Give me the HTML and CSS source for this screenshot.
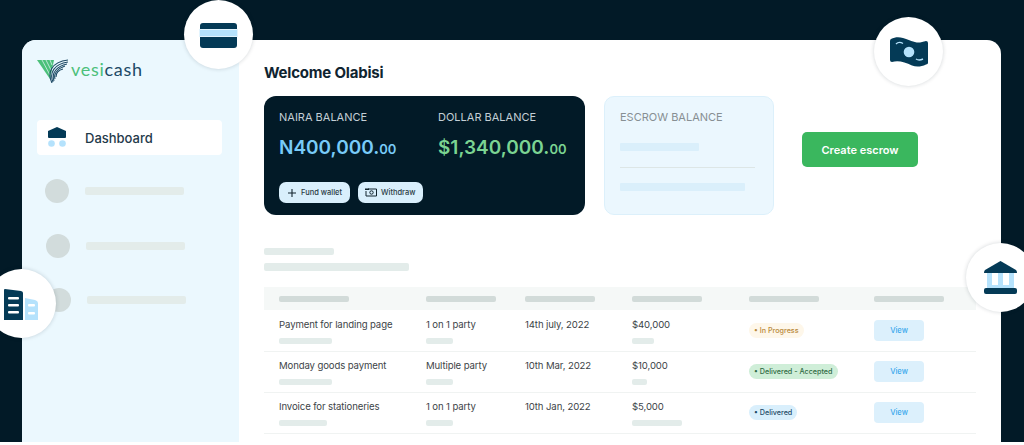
FILE: index.html
```html
<!DOCTYPE html>
<html lang="en">
<head>
  <meta charset="UTF-8">
  <meta name="viewport" content="width=device-width, initial-scale=1">
  <title>Vesicash Dashboard</title>
  <link rel="stylesheet" href="styles.css">
</head>
<body>
  <div class="hero">
    <div class="panel">
      <aside class="sidebar">
        <div class="logo">
          <svg class="logo-mark" width="31" height="24" viewBox="0 0 31 24" fill="none">
            <path d="M0 1 H17 L13 20 Z" fill="#4cc07a"/>
            <g stroke="#ebf8fe" stroke-width="0.7">
              <path d="M5 1 L13 16"/><path d="M9 1 L14 11"/><path d="M13 1 L15 6"/>
            </g>
            <g stroke="#1d4a66" stroke-width="1.1">
              <path d="M15 24 C10 14 14 3 31 1"/>
              <path d="M16 23 C12 14 17 5 31 3"/>
              <path d="M17 22 C14 14 20 7 30 5"/>
              <path d="M18 20 C16 14 22 9 28 7"/>
              <path d="M19 18 C19 14 22 11 26 10"/>
            </g>
          </svg>
          <span class="logo-text"><span class="logo-green">vesi</span>cash</span>
        </div>
        <nav class="nav">
          <a class="nav-active">
            <svg width="18" height="21" viewBox="0 0 18 21">
              <path d="M0 4 L9 0 L18 4 V10 Q18 11 17 11 H1 Q0 11 0 10 Z" fill="#043a56"/>
              <circle cx="3.5" cy="16.5" r="3.3" fill="#b5e2fc"/>
              <circle cx="14.5" cy="16.5" r="3.3" fill="#b5e2fc"/>
            </svg>
            <span class="nav-label">Dashboard</span>
          </a>
          <div class="nav-item"><i class="nav-dot"></i><i class="nav-bar"></i></div>
          <div class="nav-item"><i class="nav-dot"></i><i class="nav-bar"></i></div>
          <div class="nav-item"><i class="nav-dot"></i><i class="nav-bar"></i></div>
        </nav>
      </aside>

      <main class="main">
        <h1 class="title">Welcome Olabisi</h1>

        <section class="cards">
          <div class="balance-card">
            <div class="balance-cols">
              <div class="balance-col">
                <p class="balance-label">NAIRA BALANCE</p>
                <p class="balance-value naira">N400,000.<small>00</small></p>
              </div>
              <div class="balance-col">
                <p class="balance-label">DOLLAR BALANCE</p>
                <p class="balance-value dollar">$1,340,000.<small>00</small></p>
              </div>
            </div>
            <div class="balance-actions">
              <button class="pill-btn fund">
                <svg width="10" height="10" viewBox="0 0 10 10"><path d="M5 1 V9 M1 5 H9" stroke="#12242e" stroke-width="1.1"/></svg>
                Fund wallet
              </button>
              <button class="pill-btn withdraw">
                <svg width="12" height="9" viewBox="0 0 12 9" fill="none"><path d="M3 1 H11.500 V8 H1 V3" stroke="#12242e"/><circle cx="6.500" cy="4.500" r="1.700" stroke="#12242e"/><path d="M0 0.500 H4 V2 H0 Z" fill="#12242e"/></svg>
                Withdraw
              </button>
            </div>
          </div>

          <div class="escrow-card">
            <p class="escrow-label">ESCROW BALANCE</p>
            <i class="escrow-bar short"></i>
            <hr class="escrow-line">
            <i class="escrow-bar long"></i>
          </div>

          <button class="create-btn">Create escrow</button>
        </section>

        <div class="skeleton-head">
          <i class="skel-a"></i>
          <i class="skel-b"></i>
        </div>

        <section class="table">
          <div class="row head">
            <i class="th"></i><i class="th"></i><i class="th"></i><i class="th"></i><i class="th"></i><i class="th"></i>
          </div>
          <div class="row">
            <div class="cell"><span>Payment for landing page</span><i class="sub w53"></i></div>
            <div class="cell"><span>1 on 1 party</span><i class="sub w27"></i></div>
            <div class="cell"><span>14th july, 2022</span></div>
            <div class="cell"><span>$40,000</span><i class="sub w22"></i></div>
            <div class="cell-mid"><span class="status progress">• In Progress</span></div>
            <div class="cell-mid"><button class="view-btn">View</button></div>
          </div>
          <div class="row">
            <div class="cell"><span>Monday goods payment</span><i class="sub w53"></i></div>
            <div class="cell"><span>Multiple party</span><i class="sub w27"></i></div>
            <div class="cell"><span>10th Mar, 2022</span></div>
            <div class="cell"><span>$10,000</span><i class="sub w15"></i></div>
            <div class="cell-mid"><span class="status accepted">• Delivered - Accepted</span></div>
            <div class="cell-mid"><button class="view-btn">View</button></div>
          </div>
          <div class="row">
            <div class="cell"><span>Invoice for stationeries</span><i class="sub w48"></i></div>
            <div class="cell"><span>1 on 1 party</span><i class="sub w27"></i></div>
            <div class="cell"><span>10th Jan, 2022</span></div>
            <div class="cell"><span>$5,000</span><i class="sub w50"></i></div>
            <div class="cell-mid"><span class="status delivered">• Delivered</span></div>
            <div class="cell-mid"><button class="view-btn">View</button></div>
          </div>
        </section>
      </main>
    </div>

    <!-- floating icon circles -->
    <div class="float float-card">
      <svg width="40" height="26" viewBox="0 0 40 26">
        <rect x="1" y="0" width="37" height="25" rx="3" fill="#043a56"/>
        <rect x="0" y="6" width="39" height="8" fill="#e2f4fe"/>
        <rect x="1" y="7" width="37" height="6" fill="#b5e2fc"/>
      </svg>
    </div>
    <div class="float float-money">
      <svg width="38" height="30" viewBox="0 0 38 30">
        <path d="M1 2 C5 0 9 0 13 1 C20 3 24 6 30 5.500 L36 4 Q38 4 38 6 V26 Q38 27 36 27.500 C31 30 26 30 22 28.500 C15 25 8 23 2 25 Q0 25 0 23 V4 Q0 2.500 1 2 Z" fill="#043a56"/>
        <circle cx="19" cy="15" r="5.300" fill="#b5e2fc"/>
        <path d="M6 7 Q9 4 13 6.500" stroke="#b5e2fc" stroke-width="1.400" fill="none"/>
        <path d="M26 22 Q29 24 33 22" stroke="#b5e2fc" stroke-width="1.400" fill="none"/>
      </svg>
    </div>
    <div class="float float-building">
      <svg width="35" height="31" viewBox="0 0 35 31">
        <path d="M0 1 Q0 0 1 0 L17 2 Q19 2.500 19 4 V31 H0 Z" fill="#043a56"/>
        <path d="M21 9 L31 11 Q34 12 34 14 V31 H21 Z" fill="#b5e2fc"/>
        <g fill="#ffffff">
          <rect x="4" y="8" width="11" height="2.500" rx="1"/>
          <rect x="4" y="15" width="11" height="2.500" rx="1"/>
          <rect x="4" y="22" width="11" height="2.500" rx="1"/>
          <rect x="24" y="15" width="7" height="2.500" rx="1"/>
          <rect x="24" y="23" width="7" height="2.500" rx="1"/>
        </g>
      </svg>
    </div>
    <div class="float float-bank">
      <svg width="33" height="33" viewBox="0 0 33 33">
        <g fill="#b5e2fc">
          <rect x="3" y="12" width="5" height="15"/>
          <rect x="14" y="12" width="5" height="15"/>
          <rect x="25" y="12" width="5" height="15"/>
          <rect x="3" y="24" width="27" height="3"/>
        </g>
        <path d="M16.500 0 L32 9 Q33 10 33 12 H0 Q0 10 1 9 Z" fill="#043a56"/>
        <rect x="0" y="27" width="33" height="6" rx="2" fill="#043a56"/>
      </svg>
    </div>
  </div>
</body>
</html>
```

FILE: styles.css
```css
* {
  box-sizing: border-box;
  margin: 0;
  padding: 0;
  font-family: 'Inter', sans-serif;
}

body {
  background: #fff;
}

i {
  display: block;
}

.hero {
  position: relative;
  height: 442px;
  padding: 40px 23px 0 22px;
  background: #021a27;
  overflow: hidden;
}

.panel {
  display: flex;
  height: 402px;
  background: #fff;
  border-radius: 14px 14px 0 0;
  overflow: hidden;
}

/* sidebar */
.sidebar {
  width: 217px;
  flex-shrink: 0;
  padding: 19px 0 0 15px;
  background: #ebf8fe;
}

.logo {
  display: flex;
  align-items: center;
  gap: 3px;
  height: 24px;
}

.logo-text {
  padding-bottom: 4px;
  font-family: 'Lato', sans-serif;
  font-size: 18px;
  line-height: 24px;
  letter-spacing: 0.7px;
  color: #1d4a66;
}

.logo-green {
  font-family: inherit;
  color: #4cc07a;
}

.nav {
  margin-top: 37px;
}

.nav-active {
  display: flex;
  align-items: center;
  gap: 19px;
  width: 185px;
  height: 35px;
  padding-left: 11px;
  background: #fff;
  border-radius: 4px;
  font-size: 13px;
  font-weight: 500;
  color: #1f3a4a;
}

.nav-label {
  padding-top: 1px;
}

.nav-item {
  display: flex;
  align-items: center;
  gap: 16px;
  margin-top: 31px;
  padding-left: 8px;
}

.nav-active + .nav-item {
  margin-top: 24px;
}

.nav-item:nth-child(3) {
  padding-left: 9px;
}

.nav-item:nth-child(4) {
  margin-top: 30px;
  padding-left: 10px;
}

.nav-dot {
  width: 24px;
  height: 24px;
  border-radius: 50%;
  background: #d2dcdc;
}

.nav-bar {
  width: 99px;
  height: 8px;
  border-radius: 2px;
  background: #e3ecea;
}

/* main area */
.main {
  flex: 1;
  padding: 24px 25px 0 25px;
}

.title {
  font-size: 15px;
  font-weight: 700;
  line-height: 18px;
  letter-spacing: -0.2px;
  color: #0f2430;
}

.cards {
  display: flex;
  align-items: flex-start;
  margin-top: 14px;
}

.balance-card {
  width: 321px;
  height: 119px;
  padding: 15px 15px 0;
  background: #021a27;
  border-radius: 12px;
}

.balance-cols {
  display: flex;
}

.balance-col {
  width: 159px;
  flex-shrink: 0;
}

.balance-label {
  font-size: 11px;
  line-height: 13px;
  color: #c3cfd6;
}

.balance-value {
  margin-top: 11px;
  font-size: 19px;
  font-weight: 600;
  line-height: 26px;
  white-space: nowrap;
}

.balance-value small {
  font-size: 13px;
}

.naira {
  color: #78cbf8;
}

.dollar {
  color: #7bd492;
}

.balance-actions {
  display: flex;
  gap: 8px;
  margin-top: 20px;
}

.pill-btn {
  display: flex;
  align-items: center;
  gap: 4px;
  height: 21px;
  border: none;
  border-radius: 7px;
  background: #d9effc;
  color: #2a3b45;
  font-size: 7.5px;
  font-weight: 500;
}

.fund {
  width: 71px;
  padding-left: 8px;
}

.withdraw {
  width: 65px;
  padding-left: 7px;
}

.escrow-card {
  width: 170px;
  height: 119px;
  margin-left: 19px;
  padding: 14px 15px 0;
  background: #ebf7fe;
  border: 1px solid #dcf0fb;
  border-radius: 10px;
}

.escrow-label {
  font-size: 11px;
  line-height: 13px;
  color: #878f93;
}

.escrow-bar {
  height: 8px;
  border-radius: 1px;
  background: #daeffb;
}

.escrow-bar.short {
  width: 79px;
  margin-top: 19px;
}

.escrow-bar.long {
  width: 125px;
  margin-top: 15px;
}

.escrow-line {
  width: 135px;
  margin-top: 16px;
  border: none;
  border-top: 1px solid #dde6e6;
}

.create-btn {
  width: 116px;
  height: 35px;
  margin: 36px 0 0 28px;
  border: none;
  border-radius: 5px;
  background: #3ab75e;
  color: #fff;
  font-size: 11px;
  font-weight: 600;
}

.skeleton-head {
  margin-top: 33px;
}

.skel-a {
  width: 70px;
  height: 7px;
  border-radius: 2px;
  background: #e3ecea;
}

.skel-b {
  width: 145px;
  height: 8px;
  margin-top: 8px;
  border-radius: 2px;
  background: #e3ecea;
}

/* table */
.table {
  width: 712px;
  margin-top: 16px;
}

.row {
  display: grid;
  grid-template-columns: 147px 99px 107px 117px 125px 1fr;
  height: 41px;
  padding: 0 0 1px 15px;
  border-bottom: 1px solid #f0f3f2;
}

.row.head {
  align-items: center;
  height: 23px;
  margin-bottom: 1px;
  padding-bottom: 0;
  background: #f5f8f7;
  border-bottom: none;
}

.th {
  width: 70px;
  height: 6px;
  border-radius: 2px;
  background: #d2dbd9;
}

.cell {
  padding-top: 7px;
  font-size: 9.6px;
  line-height: 14px;
  letter-spacing: -0.12px;
  color: #3d4448;
}

.cell-mid {
  display: flex;
  align-items: center;
}

.sub {
  height: 6px;
  margin-top: 6px;
  border-radius: 2px;
  background: #e3ecea;
}

.w53 { width: 53px; }
.w48 { width: 48px; }
.w27 { width: 27px; }
.w22 { width: 22px; }
.w15 { width: 15px; }
.w50 { width: 50px; }

.status {
  display: block;
  height: 15px;
  padding: 0 5px;
  border-radius: 8px;
  font-size: 7.2px;
  font-weight: 500;
  line-height: 15px;
  white-space: nowrap;
}

.progress {
  background: #fef7ea;
  color: #b98a3a;
}

.accepted {
  background: #cfeed8;
  color: #2f6b45;
}

.delivered {
  background: #d9effc;
  color: #1d4a66;
}

.view-btn {
  width: 50px;
  height: 21px;
  border: none;
  border-radius: 4px;
  background: #dcf0fc;
  color: #3ba9ec;
  font-size: 7.5px;
  font-weight: 500;
}

/* floating circles */
.float {
  position: absolute;
  display: flex;
  align-items: center;
  justify-content: center;
  width: 69px;
  height: 69px;
  border-radius: 50%;
  background: #fff;
  box-shadow: 0 0 4px rgba(2, 26, 39, 0.18);
}

.float-card {
  left: 184px;
  top: 0;
  padding-top: 2px;
}

.float-money {
  left: 874px;
  top: 17px;
}

.float-building {
  left: -13px;
  top: 269px;
  padding-top: 2px;
}

.float-bank {
  left: 966px;
  top: 243px;
}
```
